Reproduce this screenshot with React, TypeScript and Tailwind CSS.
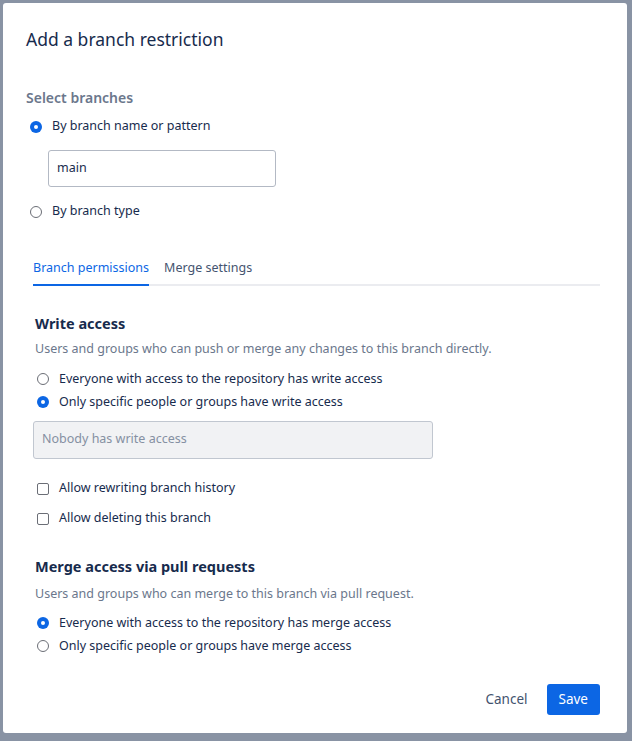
function Radio({ checked }: { checked?: boolean }) {
  return checked ? (
    <span className="flex h-3 w-3 shrink-0 items-center justify-center rounded-full bg-[#0c66e4]">
      <span className="h-1 w-1 rounded-full bg-white" />
    </span>
  ) : (
    <span className="h-3 w-3 shrink-0 rounded-full border-[1.5px] border-[#6b6e76] bg-white" />
  );
}

function RadioRow({ checked, label }: { checked?: boolean; label: string }) {
  return (
    <div className="flex h-[23px] items-center gap-[10px] text-[12.5px] text-[#172b4d]">
      <Radio checked={checked} />
      <span>{label}</span>
    </div>
  );
}

function CheckRow({ label }: { label: string }) {
  return (
    <div className="flex h-[30px] items-center gap-[10px] text-[12.5px] text-[#172b4d]">
      <span className="h-3 w-3 shrink-0 rounded-[2px] border-[1.5px] border-[#6b6e76] bg-white" />
      <span>{label}</span>
    </div>
  );
}

export default function App() {
  return (
    <div
      className="h-[741px] w-[632px] bg-[#8993a4] pb-[8px] pl-[3px] pr-[5px] pt-[3px]"
      style={{ fontFamily: '"Noto Sans", "Open Sans", sans-serif' }}
    >
      <div className="flex h-full flex-col rounded-[3px] bg-white pl-[23px] pr-[27px]">
        <h1 className="mt-[24px] text-[17.5px] leading-[24px] text-[#172b4d]">Add a branch restriction</h1>

        <h2 className="mt-[37px] text-[14px] font-semibold leading-[20px] text-[#6b778c]">Select branches</h2>
        <div className="mt-[7px] pl-[4px]">
          <RadioRow checked label="By branch name or pattern" />
          <div className="ml-[18px] mt-[12px] flex h-[37px] w-[228px] items-center rounded-[3px] border border-[#b3b9c4] px-[8px] text-[12.5px] text-[#172b4d]">
            main
          </div>
          <div className="mt-[13px]">
            <RadioRow label="By branch type" />
          </div>
        </div>

        <div className="ml-[7px] mt-[36px] flex border-b-2 border-[#ebecf0] text-[12.5px]">
          <div className="-mb-[2px] border-b-2 border-[#0c66e4] pb-[6px] text-[#0c66e4]">Branch permissions</div>
          <div className="ml-[15px] pb-[6px] text-[#44546f]">Merge settings</div>
        </div>

        <div className="pl-[9px]">
          <h3 className="mt-[27px] text-[14.5px] font-bold leading-[20px] text-[#172b4d]">Write access</h3>
          <p className="mt-[7px] text-[12.5px] leading-[18px] text-[#6b778c]">
            Users and groups who can push or merge any changes to this branch directly.
          </p>
          <div className="mt-[10px] pl-[2px]">
            <RadioRow label="Everyone with access to the repository has write access" />
            <RadioRow checked label="Only specific people or groups have write access" />
          </div>
        </div>
        <div className="ml-[7px] mt-[7px] flex h-[38px] w-[400px] items-center rounded-[3px] border border-[#c1c7d0] bg-[#f1f2f4] px-[8px] text-[12.5px] text-[#8590a2]">
          Nobody has write access
        </div>
        <div className="mt-[15px] pl-[11px]">
          <CheckRow label="Allow rewriting branch history" />
          <CheckRow label="Allow deleting this branch" />
        </div>

        <div className="pl-[9px]">
          <h3 className="mt-[22px] text-[14.5px] font-bold leading-[20px] text-[#172b4d]">Merge access via pull requests</h3>
          <p className="mt-[9px] text-[12.5px] leading-[18px] text-[#6b778c]">
            Users and groups who can merge to this branch via pull request.
          </p>
          <div className="mt-[9px] pl-[2px]">
            <RadioRow checked label="Everyone with access to the repository has merge access" />
            <RadioRow label="Only specific people or groups have merge access" />
          </div>
        </div>

        <div className="mt-[26px] flex items-center justify-end gap-[15px] text-[13.5px]">
          <button className="px-[4px] text-[#42526e]">Cancel</button>
          <button className="h-[31px] rounded-[3px] bg-[#0c66e4] px-[12px] text-white">Save</button>
        </div>
      </div>
    </div>
  );
}
